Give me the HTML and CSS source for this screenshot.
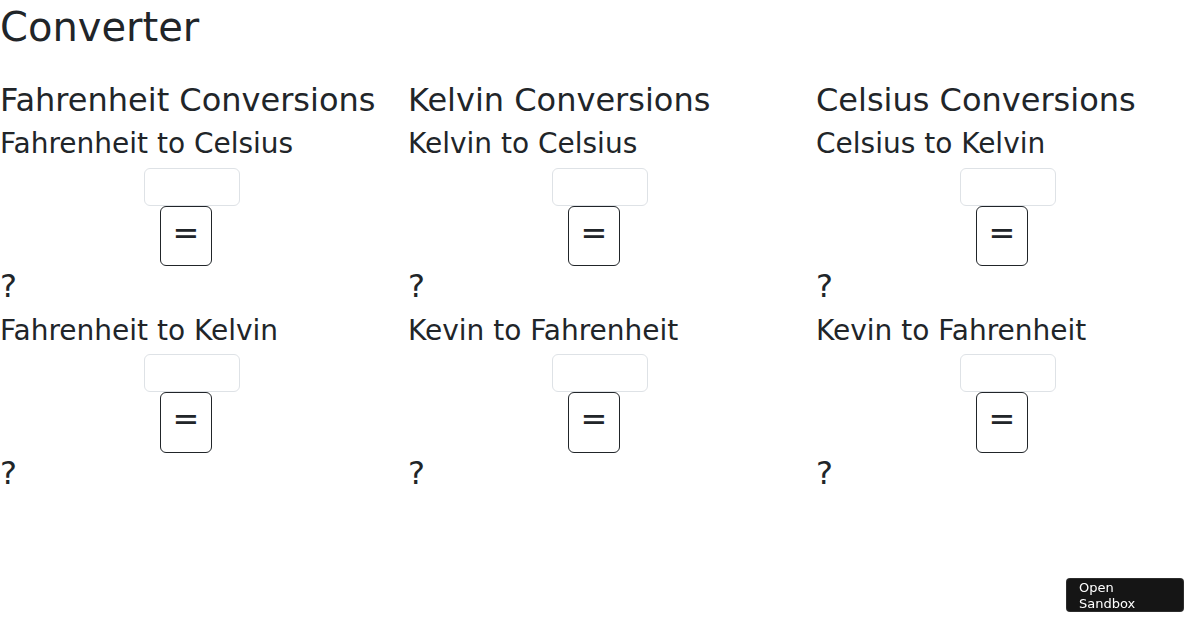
FILE: index.html
```html
<!DOCTYPE html>
<html lang="en">
<head>
<meta charset="utf-8">
<title>Converter</title>
<link rel="stylesheet" href="styles.css">
</head>
<body>
<h1 class="title">Converter</h1>
<div class="row">
  <div class="col">
    <h2 class="group-title">Fahrenheit Conversions</h2>
    <h3 class="conv-title">Fahrenheit to Celsius</h3>
    <div class="conv-form">
      <input class="field" type="text">
      <button class="eq-btn" type="button"><span class="eq-label">=</span></button>
    </div>
    <h2 class="result">?</h2>
    <h3 class="conv-title">Fahrenheit to Kelvin</h3>
    <div class="conv-form">
      <input class="field" type="text">
      <button class="eq-btn" type="button"><span class="eq-label">=</span></button>
    </div>
    <h2 class="result">?</h2>
  </div>
  <div class="col">
    <h2 class="group-title">Kelvin Conversions</h2>
    <h3 class="conv-title">Kelvin to Celsius</h3>
    <div class="conv-form">
      <input class="field" type="text">
      <button class="eq-btn" type="button"><span class="eq-label">=</span></button>
    </div>
    <h2 class="result">?</h2>
    <h3 class="conv-title">Kevin to Fahrenheit</h3>
    <div class="conv-form">
      <input class="field" type="text">
      <button class="eq-btn" type="button"><span class="eq-label">=</span></button>
    </div>
    <h2 class="result">?</h2>
  </div>
  <div class="col">
    <h2 class="group-title">Celsius Conversions</h2>
    <h3 class="conv-title">Celsius to Kelvin</h3>
    <div class="conv-form">
      <input class="field" type="text">
      <button class="eq-btn" type="button"><span class="eq-label">=</span></button>
    </div>
    <h2 class="result">?</h2>
    <h3 class="conv-title">Kevin to Fahrenheit</h3>
    <div class="conv-form">
      <input class="field" type="text">
      <button class="eq-btn" type="button"><span class="eq-label">=</span></button>
    </div>
    <h2 class="result">?</h2>
  </div>
</div>
<a class="sandbox-badge" href="#">Open Sandbox</a>
</body>
</html>
```
FILE: styles.css
```css
* {
  box-sizing: border-box;
}

html, body {
  margin: 0;
  padding: 0;
  background: #ffffff;
}

body {
  font-family: "DejaVu Sans", sans-serif;
  font-size: 16px;
  line-height: 1.5;
  color: #212529;
  overflow: hidden;
}

h1, h2, h3 {
  margin: 0 0 7px 0;
  padding-top: 1px;
  font-weight: 400;
  line-height: 1.2;
}

.title {
  font-size: 40px;
  padding-top: 3px;
  margin-bottom: 5px;
}

.row {
  display: flex;
  margin: 0 -12px;
  padding-top: 24px;
}

.col {
  flex: 1 1 0;
  padding: 0 12px;
}

.group-title {
  font-size: 32px;
}

.conv-title {
  font-size: 28px;
}

.conv-form {
  display: flex;
  flex-direction: column;
  align-items: center;
}

.field {
  display: block;
  width: 96px;
  height: 38px;
  padding: 6px 12px;
  font: inherit;
  color: #212529;
  background: #ffffff;
  border: 1px solid #dee2e6;
  border-radius: 6px;
  outline: none;
}

.eq-btn {
  display: block;
  margin-right: 12px;
  padding: 6px 12px;
  font-family: "DejaVu Sans", sans-serif;
  font-size: 16px;
  line-height: 1.5;
  color: #212529;
  background: transparent;
  border: 1px solid #212529;
  border-radius: 6px;
  cursor: pointer;
}

.eq-label {
  display: block;
  padding-top: 1px;
  margin-bottom: 7px;
  font-size: 32px;
  line-height: 1.2;
}

.result {
  font-size: 32px;
}

.sandbox-badge {
  position: fixed;
  right: 16px;
  bottom: 18px;
  width: 118px;
  height: 34px;
  padding: 1px 40px 1px 12px;
  font-size: 13px;
  line-height: 16px;
  color: #ffffff;
  background: #151515;
  border: 1px solid rgba(255, 255, 255, 0.1);
  border-radius: 4px;
  text-decoration: none;
}
```
